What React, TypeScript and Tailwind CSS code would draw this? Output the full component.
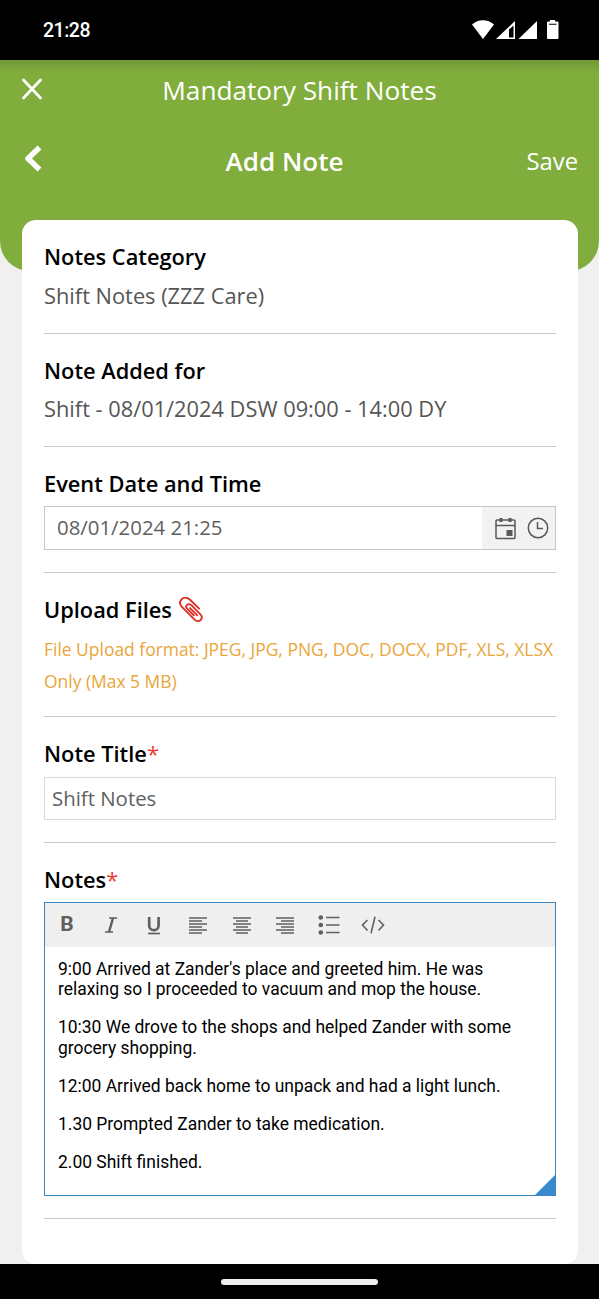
import type { ReactNode } from 'react';
import clsx from 'clsx';

const noteLines = [
  "9:00 Arrived at Zander's place and greeted him. He was relaxing so I proceeded to vacuum and mop the house.",
  '10:30 We drove to the shops and helped Zander with some grocery shopping.',
  '12:00 Arrived back home to unpack and had a light lunch.',
  '1.30 Prompted Zander to take medication.',
  '2.00 Shift finished.',
];

function StatusBar() {
  return (
    <div className="flex h-[60px] items-center justify-between bg-black pl-[43px] pr-10 text-white">
      <span className="pt-0.5 font-['Roboto',sans-serif] text-[19.5px] font-medium leading-6 tracking-[-0.5px]">21:28</span>
      <svg width="88" height="22" viewBox="0 0 88 22" fill="currentColor" aria-hidden="true">
        <path d="M1 5.500C7-.2 17-.2 23 5.500L12 20Z" />
        <path d="M44 2v18H25L44 2Zm-1.500 4.500-4.500 4V18.500h4.500Z" fillRule="evenodd" />
        <path d="M66 2v18H47.500Z" />
        <path d="M79 1h5v1.600h2.500q1 0 1 1V19q0 1-1 1h-9.500q-1 0-1-1V3.600q0-1 1-1H79ZM78 4.800v.9h7.500v-.9Z" fillRule="evenodd" />
      </svg>
    </div>
  );
}

function Header() {
  return (
    <header className="h-[211px] rounded-b-[30px] bg-[#80ad3c] text-white">
      <div className="h-3 bg-linear-to-b from-black/12 to-transparent" />
      <div className="grid h-9 grid-cols-[80px_1fr_80px] items-center">
        <button type="button" aria-label="Close" className="pb-0.5 pl-[22px]">
          <svg width="20" height="22" viewBox="0 0 20 22" fill="none" stroke="currentColor" strokeWidth="2.700" strokeLinecap="round">
            <path d="m1.500 2 17 18M18.500 2l-17 18" />
          </svg>
        </button>
        <h1 className="whitespace-nowrap text-center text-[26.2px] font-normal leading-9">Mandatory Shift Notes</h1>
      </div>
      <div className="mt-[34px] grid h-9 grid-cols-[100px_1fr_100px] items-center">
        <button type="button" aria-label="Back" className="pb-1 pl-6">
          <svg width="18" height="27" viewBox="0 0 18 27" fill="none" stroke="currentColor" strokeWidth="5.500" strokeLinejoin="round">
            <path d="M15.500 2.500 4 13.500l11.500 11" />
          </svg>
        </button>
        <h2 className="pr-[30px] text-center text-[26px] font-semibold leading-9">Add Note</h2>
        <button type="button" className="pt-0.5 pr-[21px] text-right text-[23.8px]">Save</button>
      </div>
    </header>
  );
}

interface FieldProps {
  label: string;
  required?: boolean;
  icon?: ReactNode;
  className: string;
  children: ReactNode;
}

function Field({ label, required, icon, className, children }: FieldProps) {
  return (
    <section className={clsx('border-b border-[#c9c9c9] pt-[22px]', className)}>
      <div className="flex h-[30px] items-center text-[21.8px] font-semibold text-black">
        {label}
        {required && <span className="font-normal text-[#ee3b33]">*</span>}
        {icon}
      </div>
      {children}
    </section>
  );
}

function Paperclip() {
  return (
    <svg className="ml-[7px]" width="24" height="26" viewBox="0 0 25 27" fill="none" stroke="#e02d24" strokeWidth="1.900" strokeLinecap="round">
      <path d="M21 12 11.500 2.800C8.500 0 5 .2 2.900 2.200.4 4.600.9 7.800 3 10.300l13.200 13.200c2 2 4.700 2 6.300.4 1.700-1.700 1.500-4.200-.4-6.100L12.800 8.500C11.300 7 9.400 7 8.300 8.100c-1.100 1.100-1 2.800.4 4.200l6.800 6.700" />
      <path d="m11.500 11.500 7.500 7.500" />
    </svg>
  );
}

function CalendarIcon() {
  return (
    <svg width="21" height="23" viewBox="0 0 21 23" fill="none" stroke="#595959" strokeWidth="1.500">
      <rect x="1" y="3" width="19" height="18.500" rx="1" />
      <path d="M1 8.500h19" />
      <path d="M6 1v4M15 1v4" strokeWidth="3" />
      <path d="M11.500 13h6v6h-6z" fill="#595959" stroke="none" />
    </svg>
  );
}

function ClockIcon() {
  return (
    <svg width="22" height="22" viewBox="0 0 22 22" fill="none" stroke="#595959" strokeWidth="1.500">
      <circle cx="11" cy="11" r="9.700" />
      <path d="M10.500 5v6.500H16" />
    </svg>
  );
}

function AlignIcon({ align }: { align: 'left' | 'center' | 'right' }) {
  const paths = {
    left: 'M0 1h18M0 4h13M0 7h18M0 10h13M0 13h18M0 16h13',
    center: 'M0 1h18M3 4h12M0 7h18M3 10h12M0 13h18M3 16h12',
    right: 'M0 1h18M5 4h13M0 7h18M5 10h13M0 13h18M5 16h13',
  };
  return (
    <svg width="18" height="17" viewBox="0 0 18 17" stroke="currentColor" strokeWidth="1.500">
      <path d={paths[align]} />
    </svg>
  );
}

function Toolbar() {
  return (
    <div className="flex h-11 items-center bg-[#efefef] text-[#606060] [&>button]:flex [&>button]:h-full [&>button]:w-[43.7px] [&>button]:items-center [&>button]:justify-center">
      <button type="button" className="font-['Roboto',sans-serif] text-[21px] font-bold">B</button>
      <button type="button" aria-label="Italic">
        <svg width="12" height="16" viewBox="0 0 12 16" fill="none" stroke="currentColor">
          <path d="M4 1h8M0 15h8" strokeWidth="1.700" />
          <path d="M8 1 4 15" strokeWidth="2.500" />
        </svg>
      </button>
      <button type="button" aria-label="Underline">
        <svg width="14" height="19" viewBox="0 0 14 19" fill="none" stroke="currentColor">
          <path d="M2.200 1v8.500a4.700 4.700 0 0 0 9.400 0V1" strokeWidth="2.700" />
          <path d="M1 17.500h12" strokeWidth="1.700" />
        </svg>
      </button>
      <button type="button" aria-label="Align left"><AlignIcon align="left" /></button>
      <button type="button" aria-label="Align center"><AlignIcon align="center" /></button>
      <button type="button" aria-label="Align right"><AlignIcon align="right" /></button>
      <button type="button" aria-label="Bullet list">
        <svg width="22" height="20" viewBox="0 0 22 20" stroke="currentColor" strokeWidth="1.600">
          <path d="M8 2.500h13.500M8 10h13.500M8 17.500h13.500" />
          <g fill="currentColor" stroke="none">
            <circle cx="2.800" cy="2.500" r="2.300" />
            <circle cx="2.800" cy="10" r="2.300" />
            <circle cx="2.800" cy="17.500" r="2.300" />
          </g>
        </svg>
      </button>
      <button type="button" aria-label="Code view">
        <svg width="24" height="18" viewBox="0 0 24 18" fill="none" stroke="currentColor" strokeWidth="1.600">
          <path d="M6.500 4 1.500 9l5 5.500M17.500 4l5 5-5 5.500M14 .8 10 17.200" />
        </svg>
      </button>
    </div>
  );
}

function NotesEditor() {
  return (
    <div className="relative mt-[7px] h-[294px] border border-[#3d87bf] bg-white">
      <Toolbar />
      <div className="space-y-[17.5px] px-[13px] pt-[11.5px] font-['Roboto',sans-serif] text-[17.46px] leading-[20.5px] text-black">
        {noteLines.map((line) => (
          <p key={line}>{line}</p>
        ))}
      </div>
      <svg className="absolute bottom-0 right-0" width="20" height="20" viewBox="0 0 20 20" aria-hidden="true">
        <path d="M20 0v20H0Z" fill="#3a8ad0" />
      </svg>
    </div>
  );
}

export default function App() {
  return (
    <div className="flex h-[1299px] w-[599px] flex-col overflow-hidden bg-[#f0f0f0] font-['Open_Sans',sans-serif]">
      <StatusBar />
      <Header />
      <main className="relative -mt-[51px] mr-[21px] ml-[22px] h-[1044px] rounded-[14px] bg-white px-[22px]">
        <Field label="Notes Category" className="h-[114px]">
          <p className="mt-2 text-[21.8px] leading-8 text-[#565656]">Shift Notes (ZZZ Care)</p>
        </Field>
        <Field label="Note Added for" className="h-[113px]">
          <p className="mt-[7px] text-[21.8px] leading-8 text-[#565656]">Shift - 08/01/2024 DSW 09:00 - 14:00 DY</p>
        </Field>
        <Field label="Event Date and Time" className="h-[126px]">
          <div className="mt-[7px] flex h-11 border border-[#c6c6c6] text-[20.4px] text-[#606060]">
            <span className="flex flex-1 items-center pb-0.5 pl-3">08/01/2024 21:25</span>
            <div className="flex w-[73px] items-center gap-[11px] bg-[#f2f2f2] pl-[13px]">
              <CalendarIcon />
              <ClockIcon />
            </div>
          </div>
        </Field>
        <Field label="Upload Files" icon={<Paperclip />} className="h-[144px]">
          <p className="mt-2 whitespace-nowrap text-[17.46px] leading-8 text-[#e9a63a]">
            File Upload format: JPEG, JPG, PNG, DOC, DOCX, PDF, XLS, XLSX
            <br />
            Only (Max 5 MB)
          </p>
        </Field>
        <Field label="Note Title" required className="h-[126px]">
          <div className="mt-2 flex h-[43px] items-center border border-[#d9d9d9] pl-[7px] text-[20.4px] text-[#606060]">Shift Notes</div>
        </Field>
        <Field label="Notes" required className="h-[376px]">
          <NotesEditor />
        </Field>
      </main>
      <div className="flex h-[35px] items-center justify-center bg-black">
        <div className="h-1.5 w-[157px] rounded-full bg-[#f0eef0]" />
      </div>
    </div>
  );
}
